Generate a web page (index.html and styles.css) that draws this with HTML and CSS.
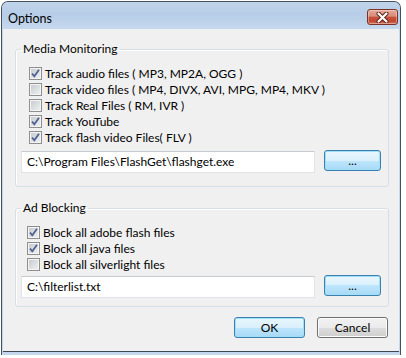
FILE: index.html
```html
<!DOCTYPE html>
<html lang="en">
<head>
    <meta charset="UTF-8">
    <meta name="viewport" content="width=device-width, initial-scale=1.0">
    <title>Options</title>
    <link rel="stylesheet" href="styles.css">
</head>
<body>
    <div class="window">
        <div class="titlebar">
            <span class="title">Options</span>
            <button class="close" aria-label="Close">
                <svg width="13" height="11" viewBox="0 0 13 11">
                    <path d="M2.5 1.5 L10.5 9.5 M10.5 1.5 L2.5 9.5" stroke="#5a2018" stroke-width="4" stroke-linecap="round"/>
                    <path d="M2.5 1.5 L10.5 9.5 M10.5 1.5 L2.5 9.5" stroke="#fff" stroke-width="2.2" stroke-linecap="round"/>
                </svg>
            </button>
        </div>
        <div class="client">
            <fieldset class="group group-media">
                <legend>Media Monitoring</legend>
                <ul class="checks">
                    <li><span class="box checked"></span>Track audio files ( MP3, MP2A, OGG )</li>
                    <li><span class="box"></span>Track video files ( MP4, DIVX, AVI, MPG, MP4, MKV )</li>
                    <li><span class="box"></span>Track Real Files ( RM, IVR )</li>
                    <li><span class="box checked"></span>Track YouTube</li>
                    <li><span class="box checked"></span>Track flash video Files( FLV )</li>
                </ul>
                <div class="path-row">
                    <div class="field">C:\Program Files\FlashGet\flashget.exe</div>
                    <button class="btn btn-default btn-browse">...</button>
                </div>
            </fieldset>
            <fieldset class="group group-ads">
                <legend>Ad Blocking</legend>
                <ul class="checks">
                    <li><span class="box checked"></span>Block all adobe flash files</li>
                    <li><span class="box checked"></span>Block all java files</li>
                    <li><span class="box"></span>Block all silverlight files</li>
                </ul>
                <div class="path-row">
                    <div class="field">C:\filterlist.txt</div>
                    <button class="btn btn-default btn-browse">...</button>
                </div>
            </fieldset>
            <div class="actions">
                <button class="btn btn-default">OK</button>
                <button class="btn">Cancel</button>
            </div>
        </div>
    </div>
</body>
</html>
```

FILE: styles.css
```css
body {
    margin: 0;
    background-color: #fff;
    font-family: "Segoe UI", Lato, sans-serif;
    font-size: 12px;
    color: #000;
}

.window {
    box-sizing: border-box;
    width: 400px;
    height: 354px;
    margin: 1px 0 0 1px;
    border: 1px solid #46505c;
    border-bottom: none;
    border-radius: 7px 7px 0 0;
    background-color: #c3d7ed;
}

.titlebar {
    height: 27px;
    display: flex;
    justify-content: space-between;
    align-items: flex-start;
    padding: 0 2px 0 6px;
    border-radius: 6px 6px 0 0;
    background: linear-gradient(#c0d4ea, #b7cde7 45%, #c5d8ee);
}

.title {
    font-size: 12.5px;
    line-height: 16px;
    margin-top: 9px;
    color: #000;
}

.close {
    width: 31px;
    height: 16px;
    margin-top: 7px;
    padding: 0;
    border: 1px solid #7b3328;
    border-radius: 3px;
    display: flex;
    align-items: center;
    justify-content: center;
    background: linear-gradient(#e6a898, #d88a77 45%, #c5523c 50%, #c34730 80%, #d27660);
    box-shadow: inset 0 0 0 1px rgba(255, 255, 255, 0.35);
}

.client {
    height: 323px;
    margin: 0 1px;
    background-color: #f0f0f0;
    border-bottom: 1px solid #3d4753;
    padding-top: 12px;
    box-sizing: border-box;
}

.group {
    margin: 0 10px 0 12px;
    padding: 0 0 13px 5px;
    border: 1px solid #d5dfe5;
    border-radius: 3px;
    box-shadow: inset 1px 1px 0 #fff;
}

.group legend {
    padding: 0 2px;
    margin-left: 0;
    line-height: 16px;
}

.group-ads {
    margin-top: 13px;
    padding-bottom: 8px;
}

.checks {
    list-style: none;
    margin: 0;
    padding: 8px 0 5px 8px;
}

.group-ads .checks {
    padding: 8px 0 3px 6px;
}

.checks li {
    height: 16px;
    display: flex;
    align-items: center;
    gap: 3px;
    white-space: nowrap;
}

.box {
    box-sizing: border-box;
    width: 13px;
    height: 13px;
    border: 1px solid #8e8f8f;
    box-shadow: inset 0 0 0 1px #f4f4f4;
    background: linear-gradient(135deg, #c3c7cc, #f3f3f3);
    flex-shrink: 0;
}

.box.checked {
    background:
        url("data:image/svg+xml,%3Csvg xmlns='http://www.w3.org/2000/svg' width='11' height='11' viewBox='0 0 11 11'%3E%3Cpath d='M2 5.5 L4.3 8.3 L9 1.8' fill='none' stroke='%234c5f92' stroke-width='1.7'/%3E%3C/svg%3E") center / 11px 11px no-repeat,
        linear-gradient(135deg, #c3c7cc, #f3f3f3);
}

.path-row {
    display: flex;
    align-items: flex-start;
    gap: 9px;
}

.field {
    box-sizing: border-box;
    width: 294px;
    height: 22px;
    margin-top: 1px;
    padding: 0 5px;
    line-height: 20px;
    background-color: #fff;
    border: 1px solid #e2e3ea;
    border-top-color: #c7ccd3;
}

.btn {
    box-sizing: border-box;
    height: 21px;
    width: 71px;
    padding: 0;
    font-family: inherit;
    font-size: 12px;
    color: #000;
    border: 1px solid #707070;
    border-radius: 3px;
    background: linear-gradient(#f2f2f2, #ebebeb 50%, #dddddd 50%, #cfcfcf);
    box-shadow: inset 0 0 0 1px #fcfcfc;
}

.btn-default {
    border-color: #3c7fb1;
    background: linear-gradient(#eaf6fd, #d9f0fc 50%, #bee6fd 50%, #a7d9f5);
    box-shadow: inset 0 0 0 1px #9fe0f7;
}

.btn-browse {
    width: 57px;
}

.actions {
    display: flex;
    justify-content: flex-end;
    gap: 12px;
    margin: 10px 11px 0 0;
}
```
